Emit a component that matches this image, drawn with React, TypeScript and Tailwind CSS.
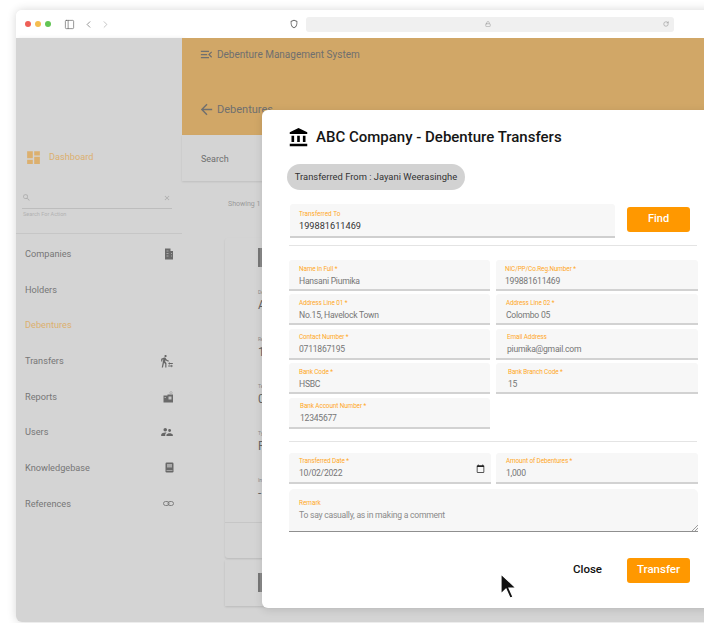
import {
  MdAccountBalance,
  MdArrowBack,
  MdCalendarToday,
  MdClose,
  MdDashboard,
  MdMenuOpen,
  MdOutlineShield,
  MdSearch,
  MdSupervisorAccount,
  MdTransferWithinAStation,
} from "react-icons/md"
import { ChevronLeft, ChevronRight, Lock, PanelLeft, RotateCw } from "lucide-react"
import type { ReactNode } from "react"

const BuildingIcon = () => (
  <svg className="h-[12px] w-[10px]" viewBox="0 0 10 12" fill="#6a6a6a">
    <path d="M1 .5h5.5v2.5H9v8.5H1z" />
    <path d="M2.5 2.5h2v1h-2zM2.5 5h2v1h-2zM2.5 7.5h2v1h-2zM7 5h1v1H7zM7 7.5h1v1H7z" fill="#a8a8a8" />
  </svg>
)

const ReportIcon = () => (
  <svg className="h-[12px] w-[11px]" viewBox="0 0 11 12">
    <path d="M.5 4.5h4v-1h5.5v8H.5z" fill="#6a6a6a" />
    <path d="M5.5 5.5h3v3h-3zM1.5 6h1.5v.8H1.5z" fill="#c4c4c4" />
    <circle cx="8" cy="1.8" r="1.2" fill="none" stroke="#a0a0a0" strokeWidth="0.7" />
  </svg>
)

const BookIcon = () => (
  <svg className="h-[11px] w-[9px]" viewBox="0 0 9 11">
    <rect x="0.5" y="0.5" width="8" height="10" rx="1.2" fill="#686868" />
    <rect x="2" y="2" width="5" height="3.5" fill="#a8a8a8" />
    <rect x="1.5" y="8" width="6" height="0.8" fill="#b4b4b4" />
  </svg>
)

const LinkIcon = () => (
  <svg className="h-[5px] w-[11px]" viewBox="0 0 11 5" fill="none" stroke="#777" strokeWidth="0.9">
    <rect x="0.5" y="0.5" width="5.5" height="4" rx="2" />
    <rect x="5" y="0.5" width="5.5" height="4" rx="2" />
  </svg>
)

const navItems = [
  { label: "Companies", icon: <BuildingIcon /> },
  { label: "Holders" },
  { label: "Debentures", active: true },
  { label: "Transfers", icon: <MdTransferWithinAStation className="h-[14px] w-[14px]" /> },
  { label: "Reports", icon: <ReportIcon /> },
  { label: "Users", icon: <MdSupervisorAccount className="h-[14px] w-[14px]" /> },
  { label: "Knowledgebase", icon: <BookIcon /> },
  { label: "References", icon: <LinkIcon /> },
]

function Field({ label, value, className, right }: { label: string; value: string; className: string; right?: ReactNode }) {
  return (
    <div className={`flex h-[31px] items-center justify-between rounded-t-[3px] border-b-2 border-[#d2d2d2] bg-[#f7f7f7] pr-[6px] pt-[2px] ${className}`}>
      <div className="flex flex-col">
        <span className="text-[6.4px] leading-[8px] tracking-[-0.1px] text-[#ffa726]">{label}</span>
        <span className="mt-[2px] text-[8.6px] leading-[12px] tracking-[-0.25px] text-[#767676]">{value}</span>
      </div>
      {right}
    </div>
  )
}

function GhostLine({ label, value }: { label: string; value: string }) {
  return (
    <div className="flex h-[47px] flex-col">
      <span className="text-[5px] leading-[7px] text-[#8a8a8a]">{label}</span>
      <span className="mt-[2px] text-[12px] leading-[14px] text-[#666]">{value}</span>
    </div>
  )
}

export default function App() {
  return (
    <div className="relative h-[623px] w-[704px] overflow-hidden bg-white pl-4 pt-[10px] font-['Roboto',sans-serif]">
      <div className="flex h-[612px] w-[720px] flex-col overflow-hidden rounded-t-[6px] rounded-b-[6px] shadow-[0_0_10px_rgba(0,0,0,0.16)]">
        {/* browser bar */}
        <div className="flex h-[28px] shrink-0 items-center bg-white pl-[9px]">
          <div className="flex gap-[4px]">
            <span className="h-[6px] w-[6px] rounded-full bg-[#ee5f57]" />
            <span className="h-[6px] w-[6px] rounded-full bg-[#f5bd4f]" />
            <span className="h-[6px] w-[6px] rounded-full bg-[#62c554]" />
          </div>
          <PanelLeft className="ml-[13px] h-[11px] w-[11px] text-[#666]" strokeWidth={1.5} />
          <ChevronLeft className="ml-[8px] h-[11px] w-[11px] text-[#666]" strokeWidth={1.5} />
          <ChevronRight className="ml-[6px] h-[11px] w-[11px] text-[#aaa]" strokeWidth={1.5} />
          <MdOutlineShield className="ml-[178px] h-[10px] w-[10px] text-[#666]" />
          <div className="ml-[7px] flex h-[15px] w-[368px] items-center rounded-[3px] bg-[#f0f0f0] pr-[5px]">
            <Lock className="ml-[179px] h-[6px] w-[6px] text-[#999]" />
            <RotateCw className="ml-auto h-[6px] w-[6px] text-[#888]" />
          </div>
        </div>

        <div className="flex min-h-0 flex-1">
          {/* sidebar */}
          <aside className="flex w-[166px] shrink-0 flex-col bg-[#d4d4d4] shadow-[2px_0_4px_rgba(0,0,0,0.08)]">
            <div className="flex items-center pl-[9px] pt-[110px] text-[#dcb06f]">
              <MdDashboard className="h-[17px] w-[17px]" />
              <span className="ml-[7px] text-[9.2px] leading-[18px]">Dashboard</span>
            </div>
            <div className="ml-[6px] mr-[10px] mt-[27px] flex items-center border-b border-[#bdbdbd] pb-[6px] text-[#ababab]">
              <MdSearch className="h-[9px] w-[9px]" />
              <MdClose className="ml-auto mr-[1px] h-[8px] w-[8px]" />
            </div>
            <span className="ml-[7px] mt-[1px] text-[5.5px] leading-[9px] text-[#b2b2b2]">Search For Action</span>
            <div className="mt-[14px] h-px bg-[#c6c6c6]" />
            <nav className="flex flex-col pt-[2px]">
              {navItems.map((item) => (
                <div key={item.label} className="flex h-[35.7px] items-center justify-between pl-[9px] pr-[8px] text-[#666]">
                  <span className={`text-[9.2px] ${item.active ? "text-[#dcb06f]" : "text-[#777]"}`}>{item.label}</span>
                  {item.icon}
                </div>
              ))}
            </nav>
          </aside>

          {/* page behind the dialog */}
          <main className="min-w-0 flex-1 bg-[#d4d4d4]">
            <header className="flex h-[97px] flex-col bg-[#d1a767] pl-[17px] text-[#6f6f6f]">
              <div className="flex items-center pt-[9px]">
                <MdMenuOpen className="h-[15px] w-[15px]" />
                <span className="ml-[3px] text-[10px] leading-[15px]">Debenture Management System</span>
              </div>
              <div className="mt-[39px] flex items-center">
                <MdArrowBack className="-ml-[1px] h-[17px] w-[17px]" />
                <span className="ml-[2px] text-[11px] leading-[17px]">Debentures</span>
              </div>
            </header>
            <div className="flex h-[46px] items-center pl-[19px] pt-[4px] shadow-[0_1px_2px_rgba(0,0,0,0.1)]">
              <span className="text-[9px] text-[#6f6f6f]">Search</span>
            </div>
            <p className="pl-[46px] pt-[18px] text-[7px] leading-[10px] text-[#9a9a9a]">Showing 1</p>
            <div className="ml-[43px] mt-[29px] h-[320px] rounded-[3px] shadow-[0_1px_2px_rgba(0,0,0,0.12)]">
              <div className="h-[285px] border-b border-[#c6c6c6] pl-[33px] pt-[10px]">
                <div className="h-[19px] w-[5px] border-l-2 border-[#777] bg-[#8a8a8a]" />
                <div className="mt-[22px]">
                  <GhostLine label="De" value="A" />
                  <GhostLine label="Re" value="1" />
                  <GhostLine label="Te" value="0" />
                  <GhostLine label="Ty" value="R" />
                  <GhostLine label="In" value="-" />
                </div>
              </div>
            </div>
            <div className="ml-[43px] mt-[2px] h-[46px] pl-[33px] pt-[13px] shadow-[0_1px_2px_rgba(0,0,0,0.12)]">
              <div className="h-[19px] w-[5px] border-l-2 border-[#777] bg-[#8a8a8a]" />
            </div>
          </main>
        </div>
      </div>

      {/* dialog */}
      <div className="absolute left-[262px] top-[110px] h-[498px] w-[460px] rounded-[6px] bg-white pl-[25px] text-[#222] shadow-[0_2px_8px_rgba(0,0,0,0.12)]">
        <div className="flex h-[54px] items-center text-black">
          <MdAccountBalance className="ml-[1px] h-[21px] w-[21px]" />
          <h1 className="ml-[7px] text-[15px] font-medium leading-[22px] text-[#151515]">ABC Company - Debenture Transfers</h1>
        </div>
        <div className="flex h-[26px] w-[178px] items-center justify-center rounded-full bg-[#d2d2d2] text-[9.4px] text-[#333]">
          Transferred From : Jayani Weerasinghe
        </div>
        <div className="mt-[14px] flex w-[403px] items-start">
          <div className="ml-[3px] flex h-[34px] w-[325px] flex-col justify-center rounded-t-[3px] border-b-2 border-[#cfcfcf] bg-[#f7f7f7] pl-[9px] pt-[2px]">
            <span className="text-[6.4px] leading-[9px] text-[#ffa726]">Transferred To</span>
            <span className="text-[9.2px] leading-[13px] text-[#333]">199881611469</span>
          </div>
          <button className="ml-[12px] mt-[3px] h-[25px] w-[63px] rounded-[3px] bg-[#ff9800] text-[11px] font-medium text-white">Find</button>
        </div>
        <div className="ml-[2px] mt-[7px] h-px w-[408px] bg-[#e4e4e4]" />

        <div className="ml-[2px] mt-[14px] grid w-[409px] grid-cols-[201px_202px] gap-x-[6px] gap-y-[3.4px]">
          <Field className="pl-[10px]" label="Name in Full *" value="Hansani Piumika" />
          <Field className="pl-[9px]" label="NIC/PP/Co.Reg.Number *" value="199881611469" />
          <Field className="pl-[10px]" label="Address Line 01 *" value="No.15, Havelock Town" />
          <Field className="pl-[10px]" label="Address Line 02 *" value="Colombo 05" />
          <Field className="pl-[10px]" label="Contact Number *" value="0711867195" />
          <Field className="pl-[11px]" label="Email Address" value="piumika@gmail.com" />
          <Field className="pl-[10px]" label="Bank Code *" value="HSBC" />
          <Field className="pl-[12px]" label="Bank Branch Code *" value="15" />
          <Field className="pl-[11px]" label="Bank Account Number *" value="12345677" />
        </div>
        <div className="ml-[2px] mt-[12px] h-px w-[408px] bg-[#e4e4e4]" />

        <div className="ml-[2px] mt-[11px] grid w-[409px] grid-cols-[202px_202px] gap-x-[5px] gap-y-[5px]">
          <Field
            className="pl-[10px]"
            label="Transferred Date *"
            value="10/02/2022"
            right={<MdCalendarToday className="h-[9px] w-[9px] text-[#222]" />}
          />
          <Field className="pl-[10px]" label="Amount of Debentures *" value="1,000" />
          <div className="relative col-span-2 h-[43px] rounded-t-[5px] border-b border-[#8f8f8f] bg-[#f7f7f7] pl-[10px] pt-[10px]">
            <div className="text-[6.4px] leading-[9px] text-[#ffa726]">Remark</div>
            <div className="mt-[1px] text-[8.6px] leading-[12px] tracking-[-0.25px] text-[#8a8a8a]">To say casually, as in making a comment</div>
            <svg className="absolute bottom-0 right-0 h-[7px] w-[7px]" viewBox="0 0 7 7" fill="none" stroke="#777" strokeWidth="0.7">
              <path d="M1 7 7 1M4 7l3-3" />
            </svg>
          </div>
        </div>

        <div className="mt-[26px] flex w-[403px] items-center justify-end">
          <button className="text-[11.5px] font-medium text-[#111]">Close</button>
          <button className="ml-[25px] h-[25px] w-[63px] rounded-[3px] bg-[#ff9800] text-[11.5px] font-medium text-white">Transfer</button>
        </div>
      </div>

      {/* mouse pointer */}
      <svg className="absolute left-[499px] top-[573px] h-[27px] w-[19px]" viewBox="0 0 19 27">
        <path d="M2 1v20l5-5 4 9 3-1-4-9h7z" fill="#111" stroke="#fff" strokeWidth="1.2" />
      </svg>
    </div>
  )
}
